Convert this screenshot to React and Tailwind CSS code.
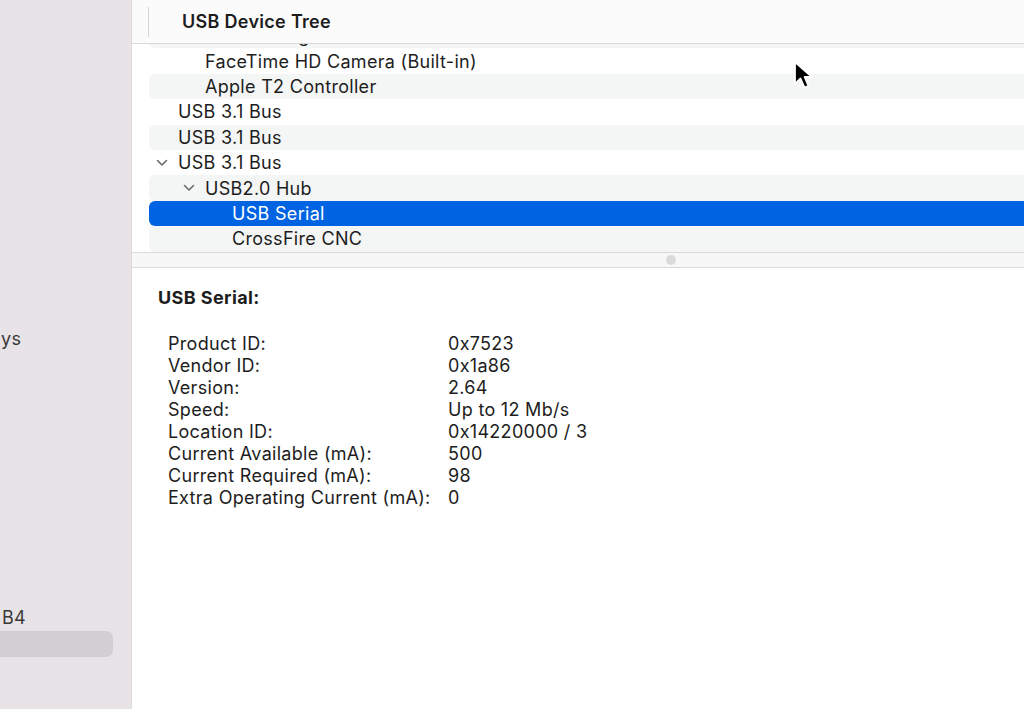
import React from 'react';

const FONT = { fontFamily: 'Inter, "Noto Sans", sans-serif' };

const treeRows = [
  { label: 'Ambient Light Sensor', level: 2, shade: true },
  { label: 'FaceTime HD Camera (Built-in)', level: 2 },
  { label: 'Apple T2 Controller', level: 2, shade: true },
  { label: 'USB 3.1 Bus', level: 1 },
  { label: 'USB 3.1 Bus', level: 1, shade: true },
  { label: 'USB 3.1 Bus', level: 1, open: true },
  { label: 'USB2.0 Hub', level: 2, open: true, shade: true },
  { label: 'USB Serial', level: 3, selected: true },
  { label: 'CrossFire CNC', level: 3, shade: true },
];

const details = [
  ['Product ID:', '0x7523'],
  ['Vendor ID:', '0x1a86'],
  ['Version:', '2.64'],
  ['Speed:', 'Up to 12 Mb/s'],
  ['Location ID:', '0x14220000 / 3'],
  ['Current Available (mA):', '500'],
  ['Current Required (mA):', '98'],
  ['Extra Operating Current (mA):', '0'],
];

const Chevron = ({ color }) => (
  <svg width="12" height="8" viewBox="0 0 12 8" fill="none">
    <path d="M1.5 1.5 L6 6 L10.5 1.5" stroke={color} strokeWidth="1.6" strokeLinecap="round" strokeLinejoin="round" />
  </svg>
);

const TreeRow = ({ row }) => {
  const indent = { 1: 'pl-[29px]', 2: 'pl-[56px]', 3: 'pl-[83px]' }[row.level];
  const bg = row.selected ? 'bg-[#0063e1] text-white' : row.shade ? 'bg-[#f4f5f5] text-[#1d1d1d]' : 'text-[#1d1d1d]';
  return (
    <div className={`relative ml-[17px] h-[25.4px] rounded-l-[6px] flex items-center text-[18px] tracking-[0.3px] ${indent} ${bg}`}>
      {row.open && (
        <span className="absolute top-[9px]" style={{ left: row.level === 1 ? 7 : 34 }}>
          <Chevron color="#6b6b6b" />
        </span>
      )}
      {row.label}
    </div>
  );
};

const Cursor = () => (
  <svg className="absolute left-[792px] top-[59px]" width="26" height="34" viewBox="0 0 26 34">
    <path d="M3 3 L3 25 L8.5 19.5 L12.5 28.5 L16.5 26.8 L12.6 18 L20 18 Z" fill="#000" stroke="#fff" strokeWidth="1.8" strokeLinejoin="round" />
  </svg>
);

export default function App() {
  return (
    <div className="relative w-[1024px] h-[709px] flex overflow-hidden bg-white" style={FONT}>
      {/* sidebar */}
      <div className="w-[132px] shrink-0 bg-[#e8e3e6] border-r border-[#ddd8db] flex flex-col text-[18px] tracking-[0.3px] text-[#3a3a3a]">
        <div className="mt-[328px] pl-[1px] leading-[22px]">ys</div>
        <div className="mt-[257px] pl-[2px] leading-[22px]">B4</div>
        <div className="mt-[2px] mr-[18px] h-[26px] rounded-r-[7px] bg-[#d3ced1]" />
      </div>

      {/* main */}
      <div className="flex-1 flex flex-col min-w-0">
        <div className="relative z-10 h-[44px] shrink-0 bg-[#fbfbfb] border-b border-[#d9d9d9] flex items-center">
          <div className="ml-[16px] w-px h-[30px] bg-[#d6d6d6]" />
          <div className="ml-[33px] text-[18px] tracking-[0.3px] font-semibold text-[#1d1d1d]">USB Device Tree</div>
        </div>

        <div className="h-[208px] overflow-hidden shrink-0">
          <div className="-mt-[21px]">
            {treeRows.map((row, i) => (
              <TreeRow key={i} row={row} />
            ))}
          </div>
        </div>

        <div className="h-[16px] shrink-0 bg-[#f7f7f7] border-y border-[#d9d9d9] flex items-center pl-[534px]">
          <div className="w-[10px] h-[10px] rounded-full bg-[#dadada]" />
        </div>

        <div className="flex-1 pl-[26px] pt-[19px] text-[#1d1d1d]">
          <div className="text-[18px] tracking-[0.4px] font-bold leading-[22px]">USB Serial:</div>
          <div className="mt-[24px] pl-[10px] grid grid-cols-[280px_1fr] text-[18px] tracking-[0.3px] leading-[22px]">
            {details.map(([k, v]) => (
              <React.Fragment key={k}>
                <div>{k}</div>
                <div>{v}</div>
              </React.Fragment>
            ))}
          </div>
        </div>
      </div>

      <Cursor />
    </div>
  );
}
